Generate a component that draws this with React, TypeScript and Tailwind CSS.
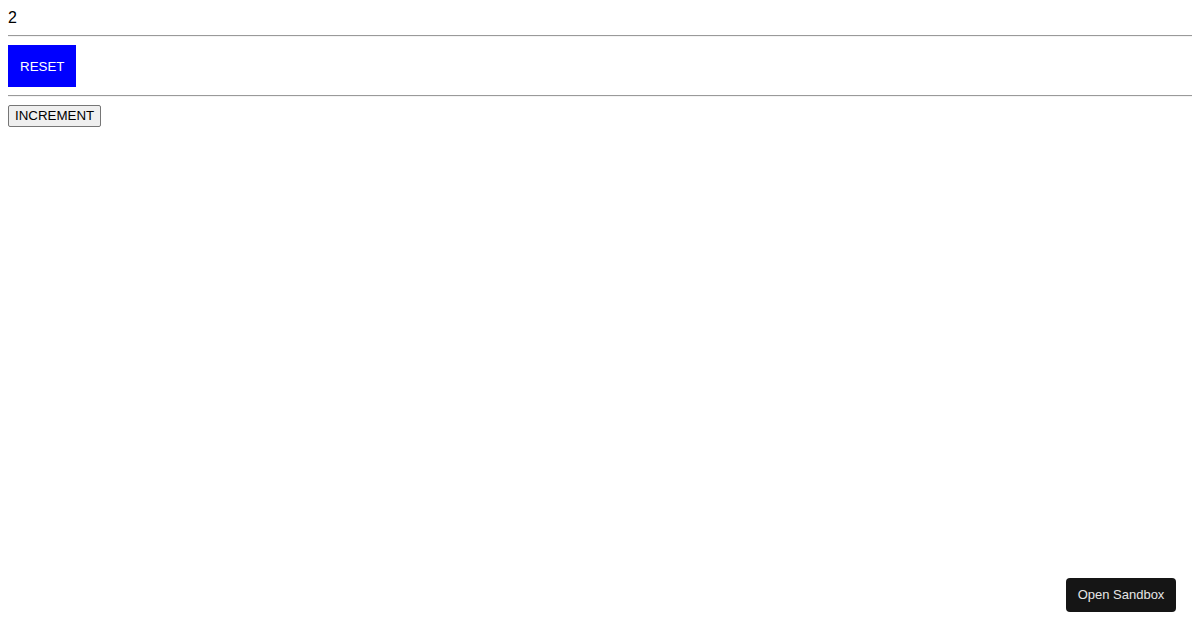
import React, { useState } from "react"

const App = () => {
  const [count, setCount] = useState(2)

  return (
    <div className="min-h-[630px] bg-white p-2 font-['Liberation_Sans',Arial,sans-serif] text-black">
      <div className="text-base leading-[19px]">{count}</div>
      <hr className="my-2 h-0 border-0 border-t border-b border-t-[#9a9a9a] border-b-[#f4f4f4]" />
      <button
        onClick={() => setCount(0)}
        className="block h-[42px] bg-[#0000ff] px-[12px] text-[13.33px] leading-[15px] text-white"
      >
        RESET
      </button>
      <hr className="my-2 h-0 border-0 border-t border-b border-t-[#9a9a9a] border-b-[#f4f4f4]" />
      <button
        onClick={() => setCount(count + 1)}
        className="block h-[22px] rounded-[2px] border border-[#767676] bg-[#efefef] px-[6px] text-[13.33px] leading-[16px]"
      >
        INCREMENT
      </button>

      <button className="fixed right-6 bottom-[18px] h-[34px] w-[110px] rounded-[4px] bg-[#151515] text-[13px] text-[#e6e6e6] font-['Liberation_Sans',Arial,sans-serif]">
        Open Sandbox
      </button>
    </div>
  )
}

export default App
